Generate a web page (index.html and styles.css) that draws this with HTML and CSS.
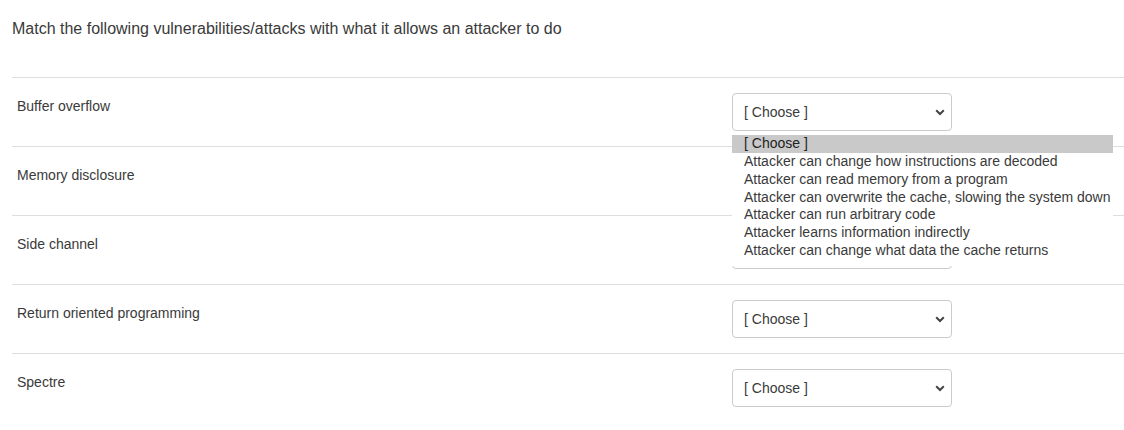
FILE: index.html
```html
<!DOCTYPE html>
<html>
<head>
<meta charset="utf-8">
<link rel="stylesheet" href="styles.css">
</head>
<body>
<div class="question">
  <p class="prompt">Match the following vulnerabilities/attacks with what it allows an attacker to do</p>
  <div class="answers">
    <div class="row">
      <div class="label">Buffer overflow</div>
      <div class="select-wrap">
        <select class="choice"><option>[ Choose ]</option></select>
        <svg class="chev" width="10" height="7" viewBox="0 0 10 7"><path d="M1.2 1.3 L5 5 L8.8 1.3" fill="none" stroke="#444" stroke-width="2"/></svg>
        <ul class="dropdown">
          <li class="active">[ Choose ]</li>
          <li>Attacker can change how instructions are decoded</li>
          <li>Attacker can read memory from a program</li>
          <li>Attacker can overwrite the cache, slowing the system down</li>
          <li>Attacker can run arbitrary code</li>
          <li>Attacker learns information indirectly</li>
          <li>Attacker can change what data the cache returns</li>
        </ul>
      </div>
    </div>
    <div class="row">
      <div class="label">Memory disclosure</div>
      <div class="select-wrap">
        <select class="choice"><option>[ Choose ]</option></select>
        <svg class="chev" width="10" height="7" viewBox="0 0 10 7"><path d="M1.2 1.3 L5 5 L8.8 1.3" fill="none" stroke="#444" stroke-width="2"/></svg>
      </div>
    </div>
    <div class="row">
      <div class="label">Side channel</div>
      <div class="select-wrap">
        <select class="choice"><option>[ Choose ]</option></select>
        <svg class="chev" width="10" height="7" viewBox="0 0 10 7"><path d="M1.2 1.3 L5 5 L8.8 1.3" fill="none" stroke="#444" stroke-width="2"/></svg>
      </div>
    </div>
    <div class="row">
      <div class="label">Return oriented programming</div>
      <div class="select-wrap">
        <select class="choice"><option>[ Choose ]</option></select>
        <svg class="chev" width="10" height="7" viewBox="0 0 10 7"><path d="M1.2 1.3 L5 5 L8.8 1.3" fill="none" stroke="#444" stroke-width="2"/></svg>
      </div>
    </div>
    <div class="row">
      <div class="label">Spectre</div>
      <div class="select-wrap">
        <select class="choice"><option>[ Choose ]</option></select>
        <svg class="chev" width="10" height="7" viewBox="0 0 10 7"><path d="M1.2 1.3 L5 5 L8.8 1.3" fill="none" stroke="#444" stroke-width="2"/></svg>
      </div>
    </div>
  </div>
</div>
</body>
</html>
```
FILE: styles.css
```css
* { box-sizing: border-box; }
html, body { margin: 0; padding: 0; background: #fff; }
body {
  font-family: "Liberation Sans", Arial, sans-serif;
  color: #333;
}
.question {
  padding-left: 12px;
}
.prompt {
  margin: 0;
  padding-top: 19px;
  height: 77px;
  font-size: 16px;
  line-height: 19px;
  color: #3a3a3a;
}
.answers { }
.row {
  display: grid;
  grid-template-columns: 715px 220px;
  height: 69px;
  padding-left: 5px;
  border-top: 1px solid #dedede;
}
.label {
  font-size: 14px;
  line-height: 16px;
  padding-top: 20px;
  color: #3a3a3a;
}
.select-wrap {
  position: relative;
  margin-top: 15px;
  height: 38px;
}
.choice {
  -webkit-appearance: none;
  appearance: none;
  display: block;
  width: 220px;
  height: 38px;
  margin: 0;
  padding: 0 30px 0 11px;
  border: 1px solid #cbcbcb;
  border-radius: 4px;
  background: #fff;
  font-family: "Liberation Sans", Arial, sans-serif;
  font-size: 14px;
  color: #3a3a3a;
  outline: none;
}
.chev {
  position: absolute;
  right: 7px;
  top: 16px;
  pointer-events: none;
}
.dropdown {
  position: absolute;
  left: 0;
  top: 42px;
  z-index: 10;
  width: 381px;
  margin: 0;
  padding: 0 0 6px 0;
  list-style: none;
  background: #fff;
  font-size: 14px;
  line-height: 17.85px;
  color: #3a3a3a;
}
.dropdown li {
  padding-left: 12px;
  white-space: nowrap;
}
.dropdown li.active {
  background: #c9c9c9;
  color: #222;
}
```
